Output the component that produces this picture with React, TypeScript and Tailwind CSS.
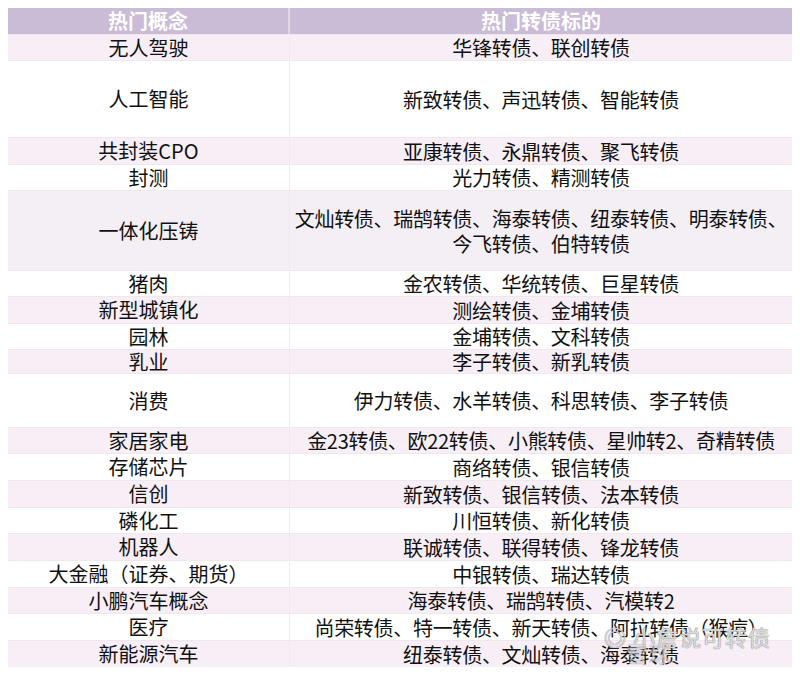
import React from "react";

type Row = { c: string; b: string[]; h: string; bg: string };

const P = "bg-[#f7eef6]";
const W = "bg-white";
const L = "bg-[#f4eef5]";

const rows: Row[] = [
  { c: "无人驾驶", b: ["华锋转债、联创转债"], h: "h-[26px]", bg: P },
  { c: "人工智能", b: ["新致转债、声迅转债、智能转债"], h: "h-[77px]", bg: W },
  { c: "共封装CPO", b: ["亚康转债、永鼎转债、聚飞转债"], h: "h-[27px]", bg: P },
  { c: "封测", b: ["光力转债、精测转债"], h: "h-[26px]", bg: W },
  {
    c: "一体化压铸",
    b: ["文灿转债、瑞鹄转债、海泰转债、纽泰转债、明泰转债、", "今飞转债、伯特转债"],
    h: "h-[80px]",
    bg: L,
  },
  { c: "猪肉", b: ["金农转债、华统转债、巨星转债"], h: "h-[26px]", bg: W },
  { c: "新型城镇化", b: ["测绘转债、金埔转债"], h: "h-[27px]", bg: P },
  { c: "园林", b: ["金埔转债、文科转债"], h: "h-[26px]", bg: W },
  { c: "乳业", b: ["李子转债、新乳转债"], h: "h-[24px]", bg: P },
  { c: "消费", b: ["伊力转债、水羊转债、科思转债、李子转债"], h: "h-[54px]", bg: W },
  { c: "家居家电", b: ["金23转债、欧22转债、小熊转债、星帅转2、奇精转债"], h: "h-[26px]", bg: P },
  { c: "存储芯片", b: ["商络转债、银信转债"], h: "h-[27px]", bg: W },
  { c: "信创", b: ["新致转债、银信转债、法本转债"], h: "h-[27px]", bg: P },
  { c: "磷化工", b: ["川恒转债、新化转债"], h: "h-[26px]", bg: W },
  { c: "机器人", b: ["联诚转债、联得转债、锋龙转债"], h: "h-[27px]", bg: P },
  { c: "大金融（证券、期货）", b: ["中银转债、瑞达转债"], h: "h-[27px]", bg: W },
  { c: "小鹏汽车概念", b: ["海泰转债、瑞鹄转债、汽模转2"], h: "h-[26px]", bg: P },
  { c: "医疗", b: ["尚荣转债、特一转债、新天转债、阿拉转债（猴痘）"], h: "h-[27px]", bg: W },
  { c: "新能源汽车", b: ["纽泰转债、文灿转债、海泰转债"], h: "h-[27px]", bg: P },
];

export default function App() {
  return (
    <div
      className="w-[800px] h-[677px] bg-white pt-[8px] px-[8px] relative overflow-hidden text-[#111111]"
      style={{ fontFamily: '"Noto Sans CJK SC", "Noto Sans", sans-serif' }}
    >
      <div className="w-[784px] flex flex-col">
        <div className="flex h-[26px] bg-[#cabbd6] text-white font-bold text-[20px] leading-[26px]">
          <div className="w-[282px] text-center border-r-2 border-[#e2d8e8]">热门概念</div>
          <div className="flex-1 text-center">热门转债标的</div>
        </div>
        {rows.map((r, i) => (
          <div key={i} className={`flex ${r.h} ${r.bg} text-[20px] border-t border-[#efe6ee]`}>
            <div className="w-[282px] flex items-center justify-center whitespace-nowrap border-r border-[#f0e9ef] leading-[24px]">
              {r.c}
            </div>
            <div className="flex-1 flex flex-col items-center justify-center whitespace-nowrap leading-[25px] tracking-[-0.3px]">
              {r.b.map((t, j) => (
                <div key={j}>{t}</div>
              ))}
            </div>
          </div>
        ))}
      </div>
      <div className="absolute left-[604px] top-[624px] text-[22px] leading-[24px] whitespace-nowrap text-white/70 [text-shadow:0_0_1px_#888,0_0_1px_#888] tracking-[1px]">
        <div>◎ 小詹说可转债</div>
        <div className="pl-[22px] -mt-[8px] opacity-70">雪球</div>
      </div>
    </div>
  );
}
